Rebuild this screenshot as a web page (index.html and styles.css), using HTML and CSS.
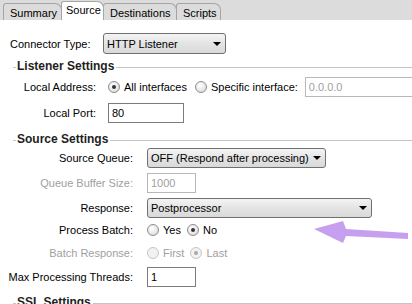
FILE: index.html
```html
<!DOCTYPE html>
<html>
    <head>
        <title>Source Connector</title>
        <link rel="stylesheet" href="styles.css">
    </head>
    <body>
        <div class="tabs">
            <div class="tab tab-summary">Summary</div>
            <div class="tab tab-source active">Source</div>
            <div class="tab tab-dest">Destinations</div>
            <div class="tab tab-scripts">Scripts</div>
        </div>

        <div class="row connector">
            <span class="lbl">Connector Type:</span>
            <div class="select w-connector">HTTP Listener<span class="caret"></span></div>
        </div>

        <div class="group-title first"><span>Listener Settings</span></div>
        <div class="listener">
            <div class="row addr">
                <span class="lbl">Local Address:</span>
                <span class="radio"><span class="dot on"></span>All interfaces</span>
                <span class="radio gap"><span class="dot"></span>Specific interface:</span>
                <div class="field disabled w-iface">0.0.0.0</div>
            </div>
            <div class="row port">
                <span class="lbl">Local Port:</span>
                <div class="field w-port">80</div>
            </div>
        </div>

        <div class="group-title"><span>Source Settings</span></div>
        <div class="source">
            <div class="row tight">
                <span class="lbl">Source Queue:</span>
                <div class="select w-queue">OFF (Respond after processing)<span class="caret"></span></div>
            </div>
            <div class="row">
                <span class="lbl muted">Queue Buffer Size:</span>
                <div class="field disabled w-small">1000</div>
            </div>
            <div class="row">
                <span class="lbl">Response:</span>
                <div class="select w-response">Postprocessor<span class="caret"></span></div>
            </div>
            <div class="row radios batch">
                <span class="lbl">Process Batch:</span>
                <span class="radio"><span class="dot"></span>Yes</span>
                <span class="radio gap2"><span class="dot on"></span>No</span>
            </div>
            <div class="row radios batch-resp">
                <span class="lbl muted">Batch Response:</span>
                <span class="radio muted"><span class="dot off"></span>First</span>
                <span class="radio gap2 muted"><span class="dot off on"></span>Last</span>
            </div>
            <div class="row threads">
                <span class="lbl">Max Processing Threads:</span>
                <div class="field w-small">1</div>
            </div>
        </div>

        <div class="group-title ssl"><span>SSL Settings</span></div>

        <svg class="pointer" width="412" height="304" viewBox="0 0 412 304">
            <defs>
                <filter id="soft" x="-10%" y="-30%" width="120%" height="160%">
                    <feGaussianBlur stdDeviation="0.6"/>
                </filter>
            </defs>
            <polygon filter="url(#soft)" fill="#c6a0ef"
                points="314,229 343,221 346,229 408,233 408,239 346,236 343,243"/>
        </svg>
    </body>
</html>
```

FILE: styles.css
```css
html, body {
    margin: 0;
    padding: 0;
}
body {
    width: 412px;
    height: 304px;
    overflow: hidden;
    position: relative;
    background: #FFF;
    color: #000;
    font: 11px "Liberation Sans", Arial, sans-serif;
}

/* tab strip */
.tabs {
    height: 20px;
    background: #DCDCDC;
    display: flex;
    align-items: flex-end;
    padding-left: 3px;
}
.tab {
    box-sizing: border-box;
    height: 17px;
    border: 1px solid #A5A5A5;
    border-bottom: none;
    border-radius: 3px 7px 0 0;
    padding: 2px 0 0 6px;
    line-height: 14px;
    margin-right: -1px;
    background: #DCDCDC;
}
.tab.active {
    height: 19px;
    padding: 1px 0 0 4px;
    background: #FFF;
    position: relative;
    z-index: 1;
}
.tab-summary { width: 59px; }
.tab-source { width: 43px; }
.tab-dest { width: 74px; }
.tab-scripts { width: 45px; }

/* rows */
.row {
    display: flex;
    align-items: center;
    height: 20px;
    margin-top: 5px;
    white-space: nowrap;
}
.lbl {
    text-align: right;
    flex: none;
}
.muted {
    color: #A0A0A0;
}

.connector {
    height: 21px;
    margin-top: 13px;
}
.connector .lbl {
    text-align: left;
    width: 93px;
    padding-left: 10px;
}

.listener .lbl {
    width: 96px;
    margin-right: 12px;
}
.listener .addr { margin-top: 4px; }
.listener .port { margin-top: 6px; }

.source .lbl {
    width: 133px;
    margin-right: 14px;
}
.source .tight { margin-top: 2px; }
.source .radios { height: 14px; }
.source .batch { margin-top: 5px; }
.source .batch-resp { margin-top: 9px; }
.source .threads { margin-top: 7px; }

/* group headings */
.group-title {
    display: flex;
    align-items: center;
    height: 14px;
    margin-top: 9px;
    padding-left: 13px;
    font-weight: bold;
    font-size: 12px;
    color: #1E1E1E;
}
.group-title.first { margin-top: 5px; }
.group-title.ssl { margin-top: 8px; }
.group-title::before {
    content: "";
    width: 3px;
    border-top: 1px solid #C4C4C4;
    margin-top: 2px;
}
.group-title::after {
    content: "";
    flex: 1;
    border-top: 1px solid #C4C4C4;
    margin-top: 2px;
}
.group-title span {
    padding: 0 2px 0 1px;
}

/* controls */
.select {
    box-sizing: border-box;
    height: 100%;
    display: flex;
    align-items: center;
    justify-content: space-between;
    padding: 0 4px 0 3px;
    border: 1px solid #707070;
    border-radius: 3px;
    background: linear-gradient(#F4F4F4, #E4E4E4 50%, #D9D9D9);
}
.caret {
    width: 0;
    height: 0;
    border-left: 4px solid transparent;
    border-right: 4px solid transparent;
    border-top: 4px solid #000;
}
.w-connector { width: 123px; }
.w-queue { width: 179px; }
.w-response { width: 225px; }

.field {
    box-sizing: border-box;
    height: 20px;
    line-height: 18px;
    padding-left: 3px;
    border: 1px solid #7C7C7C;
    background: #FFF;
}
.field.disabled {
    border-color: #B8B8B8;
    color: #A0A0A0;
}
.w-iface { width: 120px; flex: none; }
.w-port { width: 76px; }
.w-small { width: 49px; }

.radio {
    display: inline-flex;
    align-items: center;
}
.radio.gap { margin-left: 8px; margin-right: 7px; }
.radio.gap2 { margin-left: 6px; }
.dot {
    box-sizing: border-box;
    width: 12px;
    height: 12px;
    margin-right: 4px;
    border: 1px solid #8C8C8C;
    border-radius: 50%;
    background: radial-gradient(circle at 40% 35%, #FFF, #E2E2E2 70%, #D0D0D0);
    display: flex;
    align-items: center;
    justify-content: center;
}
.dot.on::after {
    content: "";
    width: 4px;
    height: 4px;
    border-radius: 50%;
    background: #333;
}
.dot.off {
    border-color: #C6C6C6;
    background: #F2F2F2;
}
.dot.off.on::after {
    background: #A8A8A8;
}

/* annotation arrow */
.pointer {
    position: absolute;
    left: 0;
    top: 0;
    pointer-events: none;
}
```
